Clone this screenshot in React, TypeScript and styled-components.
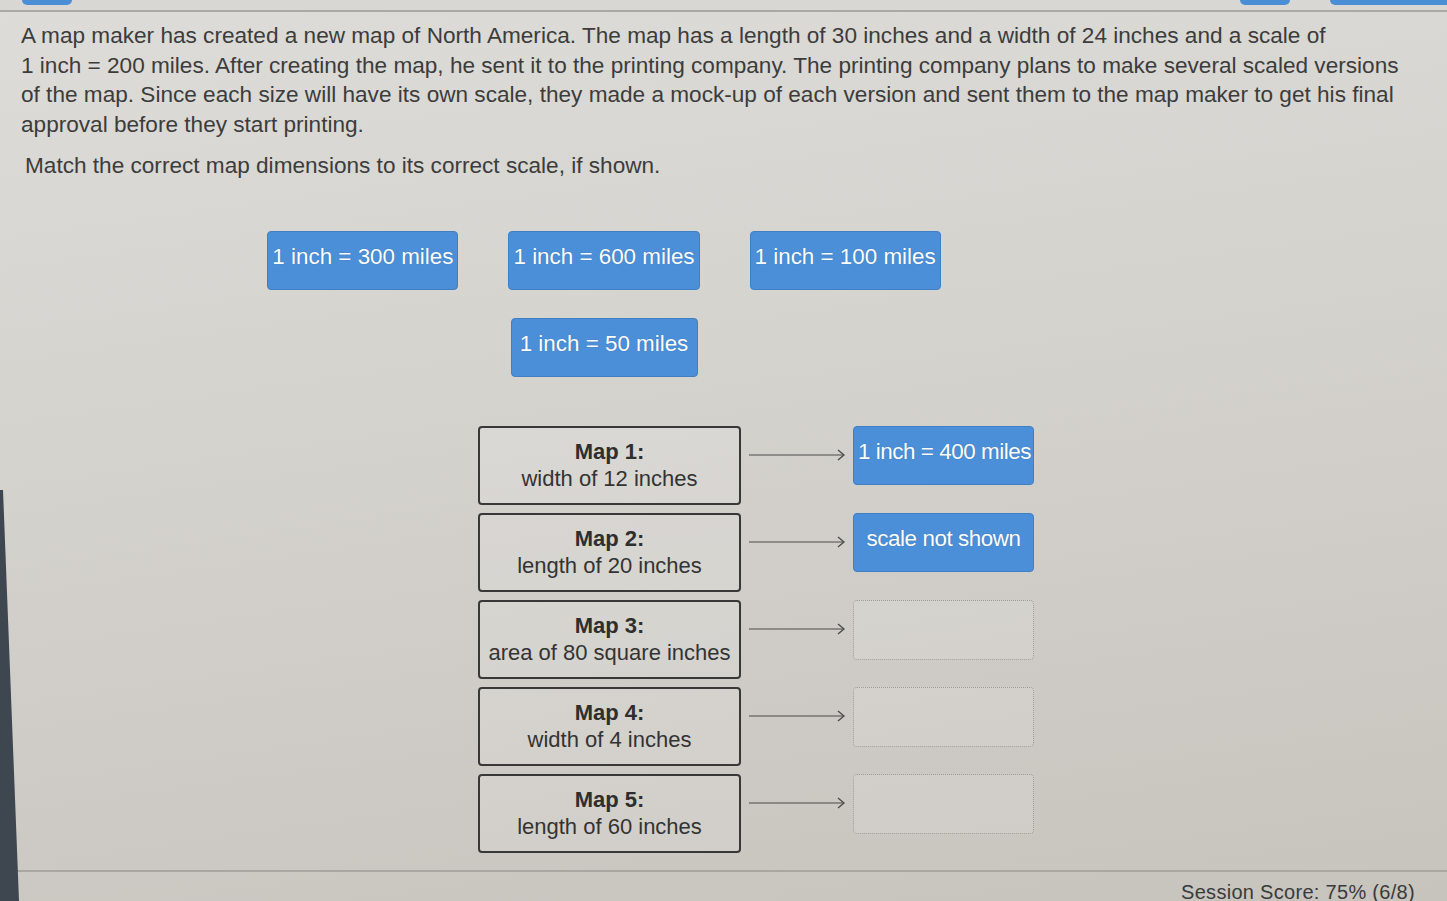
import React from "react";
import styled, { createGlobalStyle } from "styled-components";

const GlobalStyle = createGlobalStyle`
  html, body {
    margin: 0;
    padding: 0;
    overflow: hidden;
  }
  body {
    font-family: "Liberation Sans", Arial, sans-serif;
    background: linear-gradient(172deg, #dddcd8 0%, #d4d2cd 45%, #c7c4be 100%);
  }
`;

const Page = styled.div`
  position: relative;
  height: 901px;
  display: flex;
  flex-direction: column;
  overflow: hidden;
  &::before {
    content: "";
    position: absolute;
    left: 0;
    top: 0;
    width: 22px;
    height: 901px;
    background: #3e4650;
    clip-path: polygon(0 490px, 3px 490px, 19px 901px, 0 901px);
  }
`;

const TopBar = styled.div`
  height: 10px;
  flex: none;
  border-bottom: 2px solid #aaa9a5;
  background: #d8d7d3;
  display: flex;
  justify-content: space-between;
  align-items: flex-start;
  padding-left: 22px;
`;

const TopGroup = styled.div`
  display: flex;
  gap: 40px;
`;

const TopPill = styled.div<{ $w: number; $flat?: boolean }>`
  width: ${(p) => p.$w}px;
  height: 5px;
  background: #4a8fd6;
  border-radius: ${(p) => (p.$flat ? "0 0 0 14px" : "0 0 14px 14px")};
`;

const Content = styled.div`
  flex: 1;
  padding: 9px 0 0 21px;
`;

const Prompt = styled.p`
  margin: 0;
  width: 1398px;
  font-size: 22.6px;
  line-height: 29.5px;
  color: #3c3c3c;
`;

const Instruction = styled.p`
  margin: 12px 0 0 4px;
  font-size: 22.6px;
  line-height: 29.5px;
  color: #3c3c3c;
`;

const ChipBank = styled.div`
  margin: 50px 0 0 233px;
  width: 700px;
  display: flex;
  flex-wrap: wrap;
  justify-content: center;
  column-gap: 50px;
  row-gap: 28px;
`;

const Chip = styled.div<{ $compact?: boolean }>`
  box-sizing: border-box;
  min-width: ${(p) => (p.$compact ? 181 : 187)}px;
  height: 59px;
  padding: 13px 4px 0;
  background: #4a8fd8;
  border: 1px solid #3f7fc4;
  border-radius: 4px;
  color: #ffffff;
  font-size: 22.4px;
  letter-spacing: ${(p) => (p.$compact ? "-0.45px" : "0")};
  line-height: 24px;
  text-align: center;
  white-space: nowrap;
  text-shadow: 0 0 1px rgba(0, 0, 0, 0.25);
`;

const MatchList = styled.div`
  margin: 49px 0 0 457px;
  display: flex;
  flex-direction: column;
  gap: 8px;
`;

const MatchRow = styled.div`
  display: flex;
  align-items: flex-start;
`;

const SourceBox = styled.div`
  box-sizing: border-box;
  width: 263px;
  height: 79px;
  border: 2px solid #383838;
  border-radius: 4px;
  background: rgba(255, 255, 255, 0.14);
  display: flex;
  flex-direction: column;
  align-items: center;
  justify-content: center;
  color: #333;
  font-size: 22px;
  line-height: 27px;
  text-align: center;
  white-space: nowrap;
`;

const MapLabel = styled.strong`
  font-weight: 700;
  color: #2e2e2e;
`;

const ArrowCell = styled.div`
  width: 97px;
  height: 59px;
  margin: 0 7px 0 8px;
  display: flex;
  align-items: center;
`;

const Target = styled.div`
  flex: none;
  width: 181px;
`;

const EmptySlot = styled.div`
  box-sizing: border-box;
  width: 181px;
  height: 60px;
  border: 1px dotted #9c9b98;
  border-radius: 4px;
  background: rgba(255, 255, 255, 0.12);
`;

const Footer = styled.div`
  flex: none;
  height: 29px;
  border-top: 2px solid #a9a7a2;
  display: flex;
  justify-content: flex-end;
  padding-right: 32px;
`;

const Score = styled.div`
  margin-top: 8px;
  font-size: 20px;
  line-height: 24px;
  color: #3a3a3a;
  letter-spacing: 0.3px;
`;

const Arrow = () => (
  <svg width="97" height="14" viewBox="0 0 97 14">
    <line x1="0" y1="7" x2="95" y2="7" stroke="#4a4a4a" strokeWidth="1.2" />
    <polyline points="89,2 95,7 89,12" fill="none" stroke="#4a4a4a" strokeWidth="1.3" />
  </svg>
);

const maps = [
  { label: "Map 1:", desc: "width of 12 inches", answer: "1 inch = 400 miles" },
  { label: "Map 2:", desc: "length of 20 inches", answer: "scale not shown" },
  { label: "Map 3:", desc: "area of 80 square inches", answer: null },
  { label: "Map 4:", desc: "width of 4 inches", answer: null },
  { label: "Map 5:", desc: "length of 60 inches", answer: null },
];

const bank = ["1 inch = 300 miles", "1 inch = 600 miles", "1 inch = 100 miles", "1 inch = 50 miles"];

export default function App() {
  return (
    <>
      <GlobalStyle />
      <Page>
        <TopBar>
          <TopPill $w={50} />
          <TopGroup>
            <TopPill $w={50} />
            <TopPill $w={117} $flat />
          </TopGroup>
        </TopBar>
        <Content>
          <Prompt>
            A map maker has created a new map of North America. The map has a length of 30 inches and a width of 24
            inches and a scale of {"1\u00a0inch\u00a0=\u00a0200\u00a0miles."} After creating the map, he sent it to the
            printing company. The printing company plans to make several scaled versions of the map. Since each size
            will have its own scale, they made a mock-up of each version and sent them to the map maker to get his
            final approval before they start printing.
          </Prompt>
          <Instruction>Match the correct map dimensions to its correct scale, if shown.</Instruction>
          <ChipBank>
            {bank.map((b) => (
              <Chip key={b}>{b}</Chip>
            ))}
          </ChipBank>
          <MatchList>
            {maps.map((m) => (
              <MatchRow key={m.label}>
                <SourceBox>
                  <MapLabel>{m.label}</MapLabel>
                  <span>{m.desc}</span>
                </SourceBox>
                <ArrowCell>
                  <Arrow />
                </ArrowCell>
                <Target>{m.answer ? <Chip $compact>{m.answer}</Chip> : <EmptySlot />}</Target>
              </MatchRow>
            ))}
          </MatchList>
        </Content>
        <Footer>
          <Score>Session Score: 75% (6/8)</Score>
        </Footer>
      </Page>
    </>
  );
}
